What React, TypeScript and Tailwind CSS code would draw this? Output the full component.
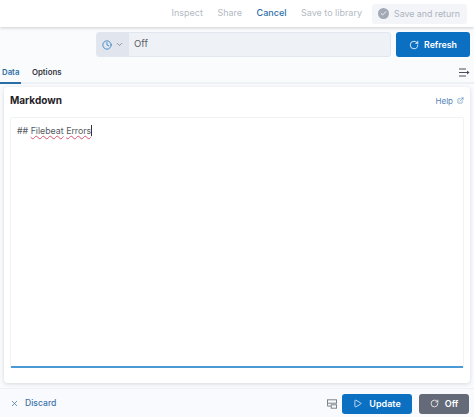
import { Check, ChevronDown, Clock, ExternalLink, Play, RotateCw, X } from 'lucide-react';

function TopLink({ label, active }: { label: string; active?: boolean }) {
  return (
    <span className={active ? 'text-[#2f6fa8] font-medium' : 'text-[#b4bac4]'}>{label}</span>
  );
}

export default function App() {
  return (
    <div className="w-[474px] h-[417px] flex flex-col bg-[#fafbfd] text-[9px] overflow-hidden" style={{ fontFamily: 'Inter, "Noto Sans", sans-serif' }}>
      <header className="h-[27px] shrink-0 bg-white shadow-[0_1px_3px_rgba(0,0,0,0.18)] flex items-center justify-end pr-[7px] z-10">
        <div className="flex items-center gap-[14.5px] mr-[10px] pb-[1px]">
          <TopLink label="Inspect" />
          <TopLink label="Share" />
          <TopLink active label="Cancel" />
          <TopLink label="Save to library" />
        </div>
        <div className="w-[95px] h-[20px] rounded-[3px] bg-[#f3f5f8] flex items-center pl-[6px] gap-[5px] text-[8.8px] text-[#aeb4bf]">
          <span className="w-[11px] h-[11px] rounded-full bg-[#a3a9b4] flex items-center justify-center">
            <Check size={7} strokeWidth={3} className="text-white" />
          </span>
          Save and return
        </div>
      </header>

      <div className="h-[25px] mt-[5px] shrink-0 flex pl-[96px] pr-[4px] gap-[5px]">
        <div className="w-[295px] flex rounded-[3px] bg-[#eef1f6] border border-[#e2e7ef] overflow-hidden">
          <div className="w-[32px] bg-[#e0e5ee] flex items-center justify-center gap-[3px] text-[#2f7fc0]">
            <Clock size={10} />
            <ChevronDown size={9} className="text-[#6f7c8e]" />
          </div>
          <span className="pl-[5px] self-center text-[#5b6068] text-[9.5px]">Off</span>
        </div>
        <button className="flex-1 rounded-[3px] bg-[#0b6fc2] text-white text-[8.8px] font-semibold flex items-center justify-center gap-[5px]">
          <RotateCw size={10} />
          Refresh
        </button>
      </div>

      <div className="h-[22px] mt-[5px] shrink-0 flex items-center border-b-2 border-[#edf0f5] pl-[2px] pr-[4px] pt-[1px] text-[7.8px] font-semibold relative">
        <span className="text-[#2a6ea6] w-[30px]">Data</span>
        <span className="text-[#343741]">Options</span>
        <span className="absolute left-0 -bottom-[2px] w-[21px] h-[2px] bg-[#2a6ea6]" />
        <svg viewBox="0 0 11 9" className="ml-auto w-[11px] h-[9px] text-[#4a4f59]" fill="none" stroke="currentColor" strokeWidth="1">
          <path d="M0 1h7M0 4.5h9M0 8h7" />
          <path d="M8 2.5l2.5 2-2.5 2z" fill="currentColor" stroke="none" />
        </svg>
      </div>

      <main className="h-[296px] mt-[3px] mx-[4px] shrink-0 bg-white rounded-[4px] shadow-[0_1px_4px_rgba(50,60,80,0.18)] flex flex-col px-[6px]">
        <div className="h-[30px] shrink-0 flex items-center justify-between pb-[3px]">
          <h2 className="text-[10px] font-bold text-[#1f2228]">Markdown</h2>
          <span className="flex items-center gap-[4px] text-[#4f82b4] text-[8px]">
            Help
            <ExternalLink size={7} />
          </span>
        </div>
        <div className="flex-1 mb-[15px] border-x border-t border-[#f0f2f5] rounded-t-[2px] pl-[6px] pt-[6px] text-[8.8px] text-[#555a63] relative">
          <span>## </span>
          <span className="underline decoration-wavy decoration-[#d9536f] underline-offset-1">Filebeat</span>
          <span> </span>
          <span className="underline decoration-wavy decoration-[#d9536f] underline-offset-1 border-r border-[#333]">Errors</span>
          <div className="absolute left-0 right-0 bottom-0 h-[2px] bg-[#4a9ad6]" />
        </div>
      </main>

      <footer className="flex-1 mt-[5px] flex items-center pl-[10px] pr-[5px] pt-[1px] bg-[#f8fafd] border-t border-[#eef0f4]">
        <X size={9} className="text-[#4f6f94]" />
        <span className="ml-[6px] text-[8.6px] text-[#3f74aa] font-medium">Discard</span>
        <svg viewBox="0 0 12 12" className="ml-auto w-[10px] h-[10px] text-[#666c76]" fill="none" stroke="currentColor" strokeWidth="1">
          <rect x="0.5" y="1" width="11" height="4" />
          <rect x="5" y="7" width="6.5" height="4" />
          <path d="M0.5 5v3.5h4" />
        </svg>
        <button className="ml-[5px] w-[70px] h-[20px] rounded-[3px] bg-[#0b6fc2] text-white font-semibold flex items-center justify-center gap-[7px]">
          <Play size={9} />
          Update
        </button>
        <button className="ml-[7px] w-[50px] h-[20px] rounded-[3px] bg-[#646a77] text-white font-semibold flex items-center justify-center gap-[6px]">
          <RotateCw size={9} />
          Off
        </button>
      </footer>
    </div>
  );
}
